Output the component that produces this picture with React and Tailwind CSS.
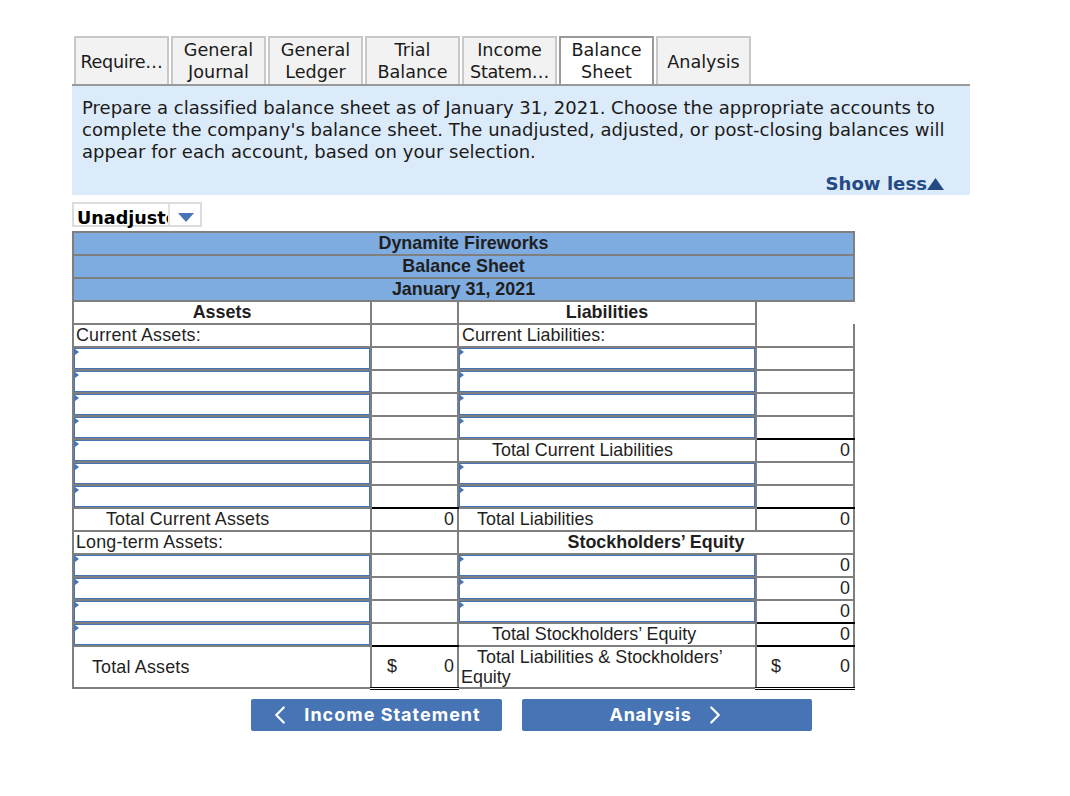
import { ChevronLeft, ChevronRight } from "lucide-react";

const tabs = [
  ["Require…"],
  ["General", "Journal"],
  ["General", "Ledger"],
  ["Trial", "Balance"],
  ["Income", "Statem…"],
  ["Balance", "Sheet"],
  ["Analysis"],
];

// "input" = account dropdown cell, plain text otherwise. lvLine / rvLine = black rule under the amount
const rows = [
  { l: "input", r: "input" },
  { l: "input", r: "input" },
  { l: "input", r: "input" },
  { l: "input", r: "input", rvLine: true },
  { l: "input", r: "Total Current Liabilities", rIndent: true, rv: "0" },
  { l: "input", r: "input" },
  { l: "input", r: "input", lvLine: true, rvLine: true },
  { l: "Total Current Assets", lIndent: true, lv: "0", r: "Total Liabilities", rSmall: true, rv: "0" },
  { l: "Long-term Assets:", rBold: "Stockholders’ Equity" },
  { l: "input", r: "input", rv: "0" },
  { l: "input", r: "input", rv: "0" },
  { l: "input", r: "input", rv: "0", rvLine: true },
  { l: "input", r: "Total Stockholders’ Equity", rIndent: true, rv: "0", lvLine: true, rvLine: true },
];

function AccountInput() {
  return (
    <div className="relative h-[21px] w-full border border-[#4674b5] bg-white">
      <span className="absolute left-0 top-0 h-0 w-0 border-y-[3px] border-l-[4px] border-y-transparent border-l-[#4674b5]" />
    </div>
  );
}

function LeftLabel({ value, indent }) {
  if (value === "input") return <AccountInput />;
  return <div className={`px-[2px] tracking-[0.17px] ${indent ? "pl-[32px]" : ""}`}>{value}</div>;
}

function RightLabel({ value, indent, small }) {
  if (value === "input") return <AccountInput />;
  return <div className={`px-[3px] ${indent ? "pl-[33px]" : ""} ${small ? "pl-[18px]" : ""}`}>{value}</div>;
}

const cell = "h-[23px] border-2 border-[#7f7f7f] p-0 align-middle leading-[19px]";

export default function App() {
  return (
    <div className="min-h-[796px] bg-white pl-[72px] pt-[36px] font-['DejaVu_Sans',sans-serif] text-[#1a1a1a]">
      {/* Tabs */}
      <div className="flex w-[898px] gap-[2px] border-b-2 border-[#999999] pl-[2px]">
        {tabs.map((t, i) => (
          <div
            key={i}
            className={`flex h-[48px] w-[95px] flex-col items-center justify-center border-2 border-b-0 text-[17.6px] leading-[22px] ${
              i === 5 ? "border-[#999999] bg-white" : "border-[#c8c8c8] bg-[#f2f2f2]"
            } ${t.length === 1 ? "pt-[2px]" : ""}`}
          >
            {t.map((line) => (
              <span key={line} className={`whitespace-nowrap ${line.endsWith("…") ? "tracking-[-0.35px]" : ""}`}>{line}</span>
            ))}
          </div>
        ))}
      </div>

      {/* Instructions */}
      <div className="h-[109px] w-[898px] bg-[#dcebf9] pl-[10px] pr-[20px] pt-[11px] text-[18px] leading-[22px] tracking-[0.02px]">
        <p>
          Prepare a classified balance sheet as of January 31, 2021. Choose the appropriate accounts to
          complete the company's balance sheet. The unadjusted, adjusted, or post-closing balances will
          appear for each account, based on your selection.
        </p>
        <div className="mr-[6px] mt-[10px] flex items-center justify-end text-[18.1px] font-bold leading-[22px] text-[#234a85]">
          Show less
          <svg width="17" height="12" viewBox="0 0 17 12"><path d="M8.5 0 L17 12 L0 12 Z" fill="#234a85" /></svg>
        </div>
      </div>

      {/* Balance selector */}
      <div className="mt-[7px] flex h-[25px] w-[130px] border-2 border-[#dcdcdc] bg-white">
        <div className="w-[94px] overflow-x-clip whitespace-nowrap pl-[3px] text-[17.6px] font-bold leading-[29px] text-black">Unadjusted</div>
        <div className="z-10 flex flex-1 items-start justify-center border-l-2 border-[#e3e3e3] bg-white pl-[2px] pt-[9px]">
          <span className="h-0 w-0 border-x-[8px] border-t-[9px] border-x-transparent border-t-[#4674b5]" />
        </div>
      </div>

      {/* Statement table */}
      <table className="mt-[4px] w-[781px] table-fixed border-collapse font-['Liberation_Sans',sans-serif] text-[17.9px] text-[#1f1f1f]">
        <colgroup>
          <col className="w-[298px]" />
          <col className="w-[87px]" />
          <col className="w-[298px]" />
          <col className="w-[98px]" />
        </colgroup>
        <tbody>
          {["Dynamite Fireworks", "Balance Sheet", "January 31, 2021"].map((h) => (
            <tr key={h}>
              <td colSpan={4} className={`${cell} bg-[#7eabe0] text-center font-bold`}>{h}</td>
            </tr>
          ))}
          <tr>
            <td className={`${cell} text-center font-bold`}>Assets</td>
            <td className={cell} />
            <td className={`${cell} text-center font-bold`}>Liabilities</td>
            <td className={`${cell} border-b-0 border-r-0`} />
          </tr>
          <tr>
            <td className={cell}><LeftLabel value="Current Assets:" /></td>
            <td className={cell} />
            <td className={cell}><RightLabel value="Current Liabilities:" /></td>
            <td className={`${cell} border-t-0`} />
          </tr>
          {rows.map((row, i) => (
            <tr key={i}>
              <td className={cell}><LeftLabel value={row.l} indent={row.lIndent} /></td>
              <td className={`${cell} pl-[2px] pr-[3px] text-right ${row.lvLine ? "border-b-black" : ""}`}>{row.lv}</td>
              {row.rBold ? (
                <td colSpan={2} className={`${cell} text-center font-bold`}>{row.rBold}</td>
              ) : (
                <>
                  <td className={cell}><RightLabel value={row.r} indent={row.rIndent} small={row.rSmall} /></td>
                  <td className={`${cell} pl-[2px] pr-[3px] text-right ${row.rvLine ? "border-b-black" : ""}`}>{row.rv}</td>
                </>
              )}
            </tr>
          ))}
          <tr>
            <td className="h-[42px] border-2 border-[#7f7f7f] p-0 pl-[18px] align-middle tracking-[0.17px]">Total Assets</td>
            <td className="h-[42px] border-2 border-[#7f7f7f] border-b-[3px] border-b-black p-0 pl-[2px] pr-[3px] align-middle [border-bottom-style:double]">
              <div className="flex justify-between pl-[13px]"><span>$</span><span>0</span></div>
            </td>
            <td className="h-[42px] border-2 border-[#7f7f7f] p-0 px-[2px] align-middle leading-[20px]">
              <div className="pl-[16px]">Total Liabilities &amp; Stockholders’</div>
              <div>Equity</div>
            </td>
            <td className="h-[42px] border-2 border-[#7f7f7f] border-b-[3px] border-b-black p-0 pl-[2px] pr-[3px] align-middle [border-bottom-style:double]">
              <div className="flex justify-between pl-[12px]"><span>$</span><span>0</span></div>
            </td>
          </tr>
        </tbody>
      </table>

      {/* Navigation */}
      <div className="ml-[179px] mt-[9px] flex gap-[20px] font-['Inter',sans-serif] text-[18px] font-bold text-white">
        <button className="flex h-[32px] w-[251px] items-center justify-center gap-[19px] rounded-[2px] bg-[#4674b5] pl-[3px] tracking-[1px]">
          <ChevronLeft size={30} strokeWidth={1.8} className="-mx-[10px]" />
          Income Statement
        </button>
        <button className="flex h-[32px] w-[290px] items-center justify-center gap-[18px] rounded-[2px] bg-[#4674b5] pr-[5px] tracking-[0.75px]">
          Analysis
          <ChevronRight size={30} strokeWidth={1.8} className="-mx-[10px]" />
        </button>
      </div>
    </div>
  );
}
